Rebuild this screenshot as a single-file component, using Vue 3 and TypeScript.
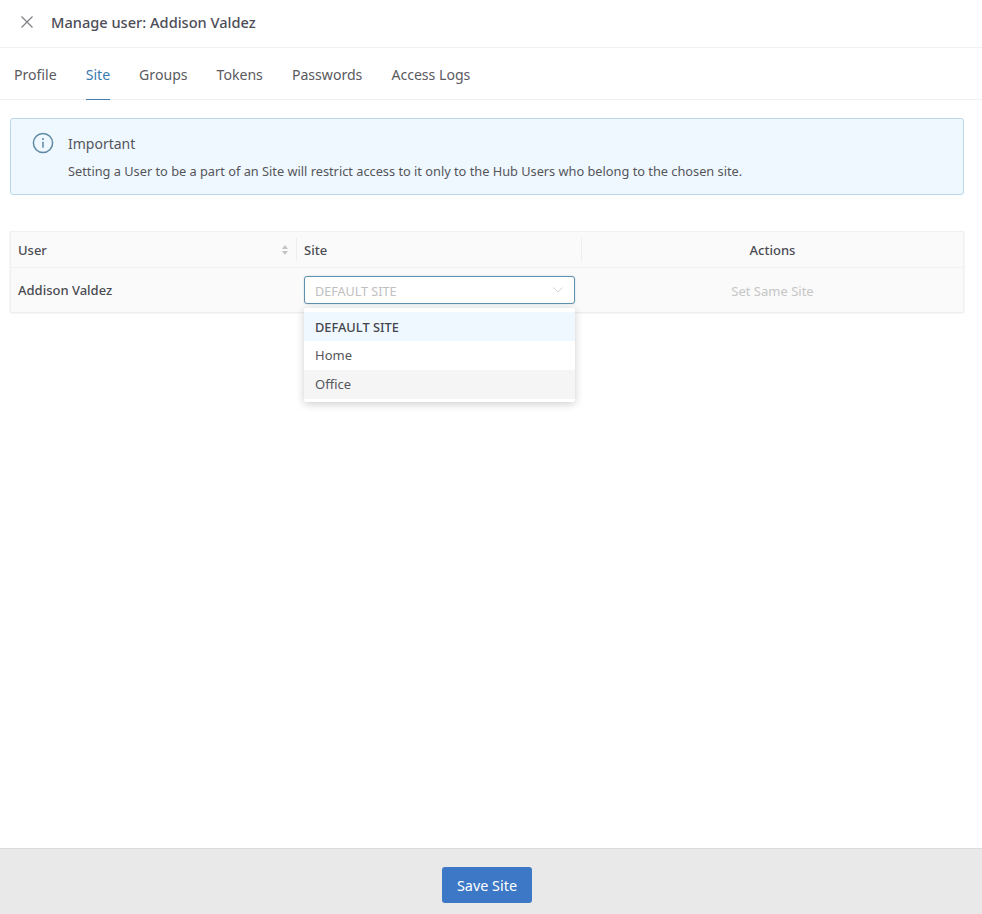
<script setup lang="ts">
const tabs: string[] = ['Profile', 'Site', 'Groups', 'Tokens', 'Passwords', 'Access Logs']
const activeTab = 'Site'
const options: { label: string; cls: string }[] = [
  { label: 'DEFAULT SITE', cls: 'selected' },
  { label: 'Home', cls: '' },
  { label: 'Office', cls: 'hover' }
]
</script>

<template>
  <div class="page">
    <header class="head">
      <svg class="close" width="14" height="14" viewBox="0 0 14 14" aria-hidden="true">
        <path d="M1.5 1.5 12.5 12.5M12.5 1.5 1.5 12.5" stroke="#7f7f85" stroke-width="1.2" fill="none" />
      </svg>
      <h1 class="title">Manage user: Addison Valdez</h1>
    </header>

    <nav class="tabs">
      <a v-for="t in tabs" :key="t" class="tab" :class="{ active: t === activeTab }">{{ t }}</a>
    </nav>

    <main class="content">
      <section class="alert">
        <svg class="info" width="22" height="22" viewBox="0 0 22 22" aria-hidden="true">
          <circle cx="11" cy="11" r="9.6" fill="none" stroke="#5f8aa6" stroke-width="1.5" />
          <circle cx="11" cy="6.9" r="1" fill="#5f8aa6" />
          <path d="M11 9.8V15.8" stroke="#5f8aa6" stroke-width="1.5" />
        </svg>
        <div class="alert-body">
          <div class="alert-title">Important</div>
          <div class="alert-text">Setting a User to be a part of an Site will restrict access to it only to the Hub Users who belong to the chosen site.</div>
        </div>
      </section>

      <section class="table">
        <div class="row thead">
          <div class="cell c1">
            <span>User</span>
            <svg class="sort" width="8" height="12" viewBox="0 0 8 12" aria-hidden="true">
              <path d="M4 1 7 5H1Z" fill="#c4c4c4" />
              <path d="M4 11 1 7H7Z" fill="#c4c4c4" />
            </svg>
          </div>
          <div class="cell c2"><span>Site</span></div>
          <div class="cell c3"><span>Actions</span></div>
        </div>
        <div class="row tbody">
          <div class="cell c1 name">Addison Valdez</div>
          <div class="cell c2 select-cell">
            <div class="select">
              <span class="select-value">DEFAULT SITE</span>
              <svg width="12" height="8" viewBox="0 0 12 8" aria-hidden="true">
                <path d="M1.5 1.5 6 6 10.5 1.5" stroke="#d4d4d4" stroke-width="1" fill="none" />
              </svg>
            </div>
            <ul class="menu">
              <li v-for="o in options" :key="o.label" class="opt" :class="o.cls">{{ o.label }}</li>
            </ul>
          </div>
          <div class="cell c3 muted"><span>Set Same Site</span></div>
        </div>
      </section>
    </main>

    <footer class="foot">
      <button class="save" type="button">Save Site</button>
    </footer>
  </div>
</template>

<style>
html, body { margin: 0; background: #fff; }
</style>

<style scoped>
.page {
  width: 982px;
  height: 914px;
  display: flex;
  flex-direction: column;
  font-family: "Noto Sans", "Open Sans", sans-serif;
  font-size: 13px;
  color: #4a4a52;
  overflow: hidden;
  background: #fff;
}
.head {
  height: 47px;
  flex: none;
  display: flex;
  align-items: center;
  padding-left: 20px;
  gap: 17px;
  border-bottom: 1px solid #f0f0f0;
  box-sizing: content-box;
}
.close { margin-top: -3px; }
.title {
  margin: -4px 0 0;
  font-size: 14.6px;
  font-weight: 500;
  color: #4d4d57;
}
.tabs {
  height: 52px;
  flex: none;
  display: flex;
  gap: 29px;
  padding-left: 14px;
  border-bottom: 1px solid #f0f0f0;
  box-sizing: border-box;
}
.tab {
  font-size: 14.1px;
  color: #5a5a60;
  line-height: 54px;
  height: 52px;
  box-sizing: border-box;
}
.tab.active {
  color: #3a7ab0;
  border-bottom: 1px solid #3f7fae;
}
.content {
  flex: 1;
  padding: 18px 18px 0 10px;
}
.alert {
  height: 77px;
  box-sizing: border-box;
  display: flex;
  gap: 14px;
  padding: 12px 21px;
  background: #eff8fe;
  border: 1px solid #b9d8ea;
  border-radius: 3px;
}
.info { margin-top: 1px; }
.alert-title {
  font-size: 14px;
  line-height: 20px;
  color: #55555c;
  margin-top: 3px;
}
.alert-text {
  font-size: 12.77px;
  line-height: 18px;
  margin-top: 8px;
  color: #55555c;
  white-space: nowrap;
}
.table {
  margin-top: 36px;
  border: 1px solid #f0f0f0;
  border-bottom: none;
  box-shadow: 0 1px 2px rgba(0, 0, 0, 0.1);
  background: #fafafa;
}
.row { display: flex; }
.thead {
  height: 36px;
  box-sizing: border-box;
  border-bottom: 1px solid #f0f0f0;
  font-weight: 500;
  color: #4b4b52;
}
.tbody { height: 44px; }
.cell {
  display: flex;
  align-items: center;
  box-sizing: border-box;
  position: relative;
}
.c1 {
  width: 286px;
  padding-left: 7px;
  justify-content: space-between;
  padding-right: 8px;
}
.c2 { width: 285px; padding-left: 7px; }
.c3 { flex: 1; justify-content: center; }
.thead .c1::after, .thead .c2::after {
  content: "";
  position: absolute;
  right: 0;
  top: 6px;
  bottom: 6px;
  width: 1px;
  background: #eeeeee;
}
.name { font-weight: 500; color: #4b4b52; }
.muted { color: #c6c6c6; padding-top: 2px; }
.select-cell { padding-left: 7px; }
.select {
  width: 271px;
  height: 28px;
  box-sizing: border-box;
  border: 1px solid #5f90ad;
  border-radius: 3px;
  background: #fff;
  padding: 0 10px;
  display: flex;
  align-items: center;
  justify-content: space-between;
  color: #c0c0c0;
  font-size: 12.6px;
  box-shadow: 0 0 2px rgba(95, 144, 173, 0.35);
}
.select-value { padding-top: 2px; }
.menu {
  position: absolute;
  left: 7px;
  top: 40px;
  width: 271px;
  margin: 0;
  padding: 4px 0 3px;
  list-style: none;
  background: #fff;
  border-radius: 2px;
  box-shadow: 0 2px 8px rgba(0, 0, 0, 0.2);
  z-index: 2;
}
.opt {
  height: 29px;
  line-height: 29px;
  padding-left: 11px;
  color: #55555c;
}
.opt.selected { background: #eff8fe; font-weight: 500; color: #45454d; font-size: 12.8px; line-height: 30px; }
.opt.hover { background: #f5f5f5; }
.foot {
  height: 66px;
  flex: none;
  box-sizing: border-box;
  background: #e9e9e9;
  border-top: 1px solid #dcdcdc;
  display: flex;
  justify-content: center;
  align-items: flex-start;
  padding: 18px 8px 0 0;
}
.save {
  width: 90px;
  height: 36px;
  border: none;
  border-radius: 3px;
  background: #3c78c6;
  color: #fff;
  font: inherit;
  font-size: 14.4px;
  padding: 0;
}
</style>
